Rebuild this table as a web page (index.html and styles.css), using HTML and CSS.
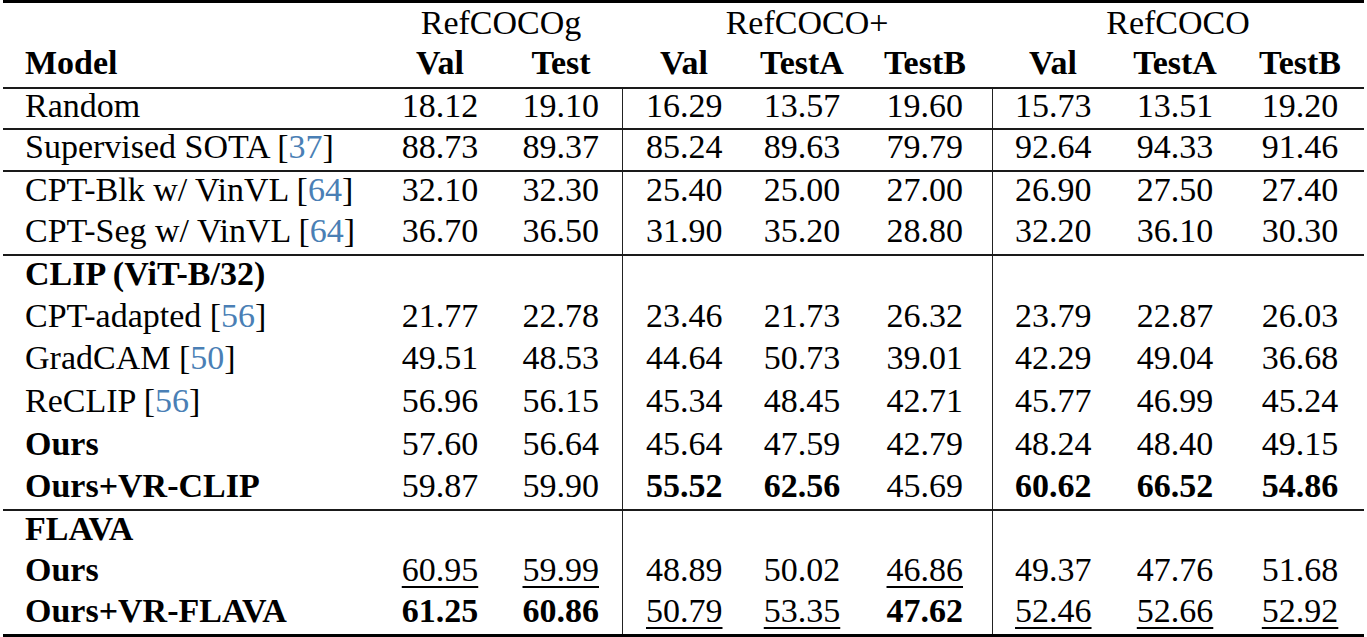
FILE: index.html
```html
<!DOCTYPE html>
<html lang="en">
<head>
  <meta charset="UTF-8">
  <title>Referring expression results</title>
  <link rel="stylesheet" href="styles.css">
</head>
<body>

  <table class="results">
    <colgroup>
      <col class="c-model">
      <col class="c-120"><col class="c-122">
      <col class="c-124"><col class="c-112"><col class="c-134">
      <col class="c-122"><col class="c-122"><col class="c-128">
    </colgroup>
    <thead>
      <tr class="top">
        <th></th>
        <th colspan="2" class="set">RefCOCOg</th>
        <th colspan="3" class="set">RefCOCO+</th>
        <th colspan="3" class="set">RefCOCO</th>
      </tr>
      <tr class="split">
        <th class="name">Model</th>
        <th>Val</th><th>Test</th>
        <th>Val</th><th>TestA</th><th>TestB</th>
        <th>Val</th><th>TestA</th><th>TestB</th>
      </tr>
    </thead>
    <tbody>
      <tr class="split short">
        <td class="name">Random</td>
        <td>18.12</td><td>19.10</td>
        <td class="sep">16.29</td><td>13.57</td><td>19.60</td>
        <td class="sep">15.73</td><td>13.51</td><td>19.20</td>
      </tr>
      <tr class="split">
        <td class="name">Supervised SOTA [<span class="cite">37</span>]</td>
        <td>88.73</td><td>89.37</td>
        <td class="sep">85.24</td><td>89.63</td><td>79.79</td>
        <td class="sep">92.64</td><td>94.33</td><td>91.46</td>
      </tr>
      <tr>
        <td class="name">CPT-Blk w/ VinVL [<span class="cite">64</span>]</td>
        <td>32.10</td><td>32.30</td>
        <td class="sep">25.40</td><td>25.00</td><td>27.00</td>
        <td class="sep">26.90</td><td>27.50</td><td>27.40</td>
      </tr>
      <tr class="split">
        <td class="name">CPT-Seg w/ VinVL [<span class="cite">64</span>]</td>
        <td>36.70</td><td>36.50</td>
        <td class="sep">31.90</td><td>35.20</td><td>28.80</td>
        <td class="sep">32.20</td><td>36.10</td><td>30.30</td>
      </tr>
      <tr class="tall">
        <td class="name"><b>CLIP (ViT-B/32)</b></td>
        <td></td><td></td>
        <td class="sep"></td><td></td><td></td>
        <td class="sep"></td><td></td><td></td>
      </tr>
      <tr class="tall">
        <td class="name">CPT-adapted [<span class="cite">56</span>]</td>
        <td>21.77</td><td>22.78</td>
        <td class="sep">23.46</td><td>21.73</td><td>26.32</td>
        <td class="sep">23.79</td><td>22.87</td><td>26.03</td>
      </tr>
      <tr class="tall">
        <td class="name">GradCAM [<span class="cite">50</span>]</td>
        <td>49.51</td><td>48.53</td>
        <td class="sep">44.64</td><td>50.73</td><td>39.01</td>
        <td class="sep">42.29</td><td>49.04</td><td>36.68</td>
      </tr>
      <tr class="tall">
        <td class="name">ReCLIP [<span class="cite">56</span>]</td>
        <td>56.96</td><td>56.15</td>
        <td class="sep">45.34</td><td>48.45</td><td>42.71</td>
        <td class="sep">45.77</td><td>46.99</td><td>45.24</td>
      </tr>
      <tr class="tall">
        <td class="name"><b>Ours</b></td>
        <td>57.60</td><td>56.64</td>
        <td class="sep">45.64</td><td>47.59</td><td>42.79</td>
        <td class="sep">48.24</td><td>48.40</td><td>49.15</td>
      </tr>
      <tr class="tall split">
        <td class="name"><b>Ours+VR-CLIP</b></td>
        <td>59.87</td><td>59.90</td>
        <td class="sep"><b>55.52</b></td><td><b>62.56</b></td><td>45.69</td>
        <td class="sep"><b>60.62</b></td><td><b>66.52</b></td><td><b>54.86</b></td>
      </tr>
      <tr class="mid">
        <td class="name"><b>FLAVA</b></td>
        <td></td><td></td>
        <td class="sep"></td><td></td><td></td>
        <td class="sep"></td><td></td><td></td>
      </tr>
      <tr class="mid">
        <td class="name"><b>Ours</b></td>
        <td><u>60.95</u></td><td><u>59.99</u></td>
        <td class="sep">48.89</td><td>50.02</td><td><u>46.86</u></td>
        <td class="sep">49.37</td><td>47.76</td><td>51.68</td>
      </tr>
      <tr class="mid last">
        <td class="name"><b>Ours+VR-FLAVA</b></td>
        <td><b>61.25</b></td><td><b>60.86</b></td>
        <td class="sep"><u>50.79</u></td><td><u>53.35</u></td><td><b>47.62</b></td>
        <td class="sep"><u>52.46</u></td><td><u>52.66</u></td><td><u>52.92</u></td>
      </tr>
    </tbody>
  </table>

</body>
</html>
```

FILE: styles.css
```css
body {
  margin: 0;
  padding: 0 3px;
  background: #fff;
  color: #000;
  font-family: "Liberation Serif", "Times New Roman", Times, serif;
}

.results {
  border-collapse: collapse;
  table-layout: fixed;
  width: 1361px;
  font-family: "Liberation Serif", "Times New Roman", Times, serif;
  font-size: 34px;
  line-height: 1;
}

.c-model { width: 377px; }
.c-112 { width: 112px; }
.c-120 { width: 120px; }
.c-122 { width: 122px; }
.c-124 { width: 124px; }
.c-128 { width: 128px; }
.c-134 { width: 134px; }

.results th,
.results td {
  box-sizing: border-box;
  height: 42px;
  padding: 0 0 5px;
  text-align: center;
  vertical-align: middle;
  white-space: nowrap;
  font-family: inherit;
}

.results th {
  height: 43px;
  font-weight: bold;
}

.results tr.top th {
  padding-bottom: 2px;
}

.results tr.short td {
  height: 41px;
}

.results tr.tall td {
  height: 42.6px;
}

.results tr.mid td {
  height: 41.7px;
}

.results th.set {
  font-weight: normal;
}

.results .name {
  text-align: left;
  padding-left: 22px;
}

.results tr.top th {
  border-top: 3px solid #000;
}

.results tr.split th,
.results tr.split td {
  border-bottom: 2px solid #1a1a1a;
}

.results tr.last td {
  border-bottom: 3px solid #000;
}

.results td.sep {
  border-left: 1.5px solid #222;
}

.cite {
  color: #4a7fb5;
}

u {
  text-decoration-thickness: 1.5px;
  text-underline-offset: 5px;
}
```
